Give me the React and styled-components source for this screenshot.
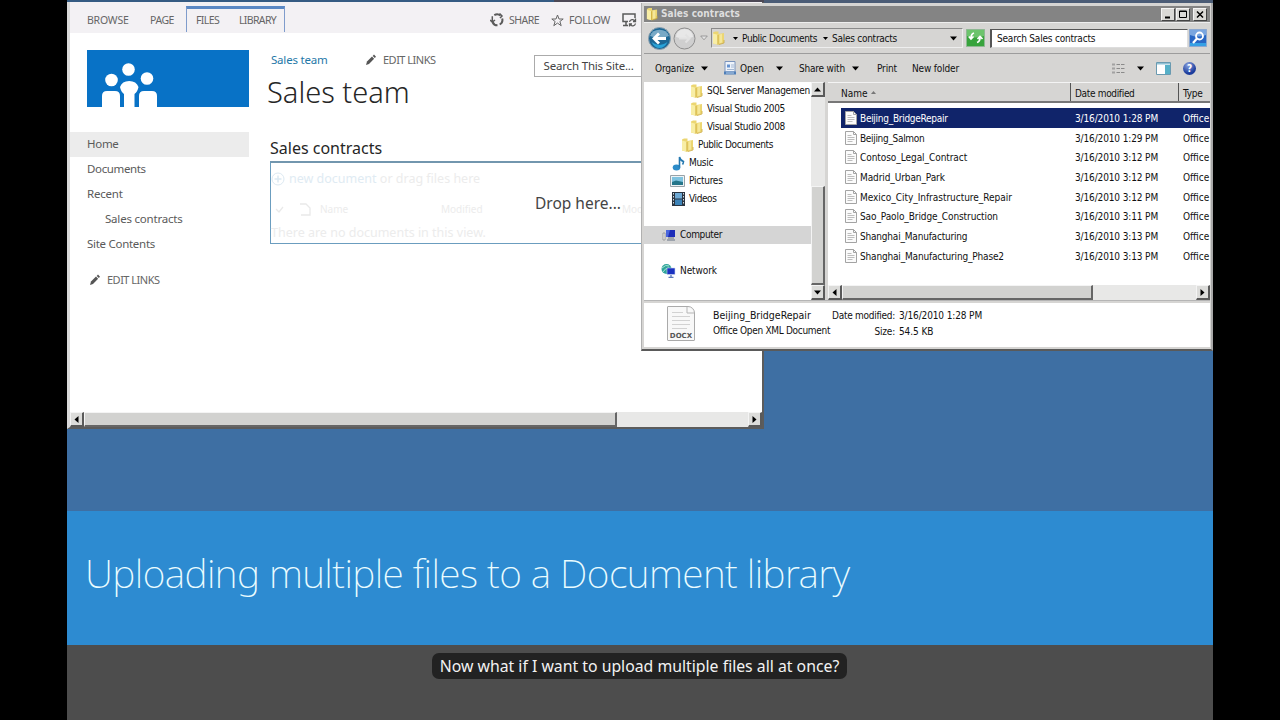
import React from 'react'
import styled, { createGlobalStyle } from 'styled-components'

const GlobalStyle = createGlobalStyle`
  * { box-sizing: border-box; }
  body {
    margin: 0;
    background: #000;
    overflow: hidden;
  }
`

const Stage = styled.main`
  width: 1280px;
  height: 720px;
  padding: 0 67px;
  background: #000;
  font-family: "Noto Sans", "Open Sans", sans-serif;
  white-space: nowrap;
`

const Desktop = styled.section`
  position: relative;
  height: 511px;
  overflow: hidden;
  background: #3e6fa3;
`

const TopEdge = styled.div`
  height: 3px;
  background: linear-gradient(90deg, #355b83 0 487px, #4c4855 487px 697px, #4b5c76 697px);
`

const Banner = styled.section`
  height: 134px;
  padding-left: 18px;
  background: #2d8bd1;
`

const BannerTitle = styled.h1`
  margin: 0;
  color: #eafcff;
  font-size: 39px;
  font-weight: 250;
  line-height: 124px;
  letter-spacing: -0.58px;
`

const Footer = styled.footer`
  display: flex;
  justify-content: center;
  align-items: flex-start;
  height: 75px;
  padding: 8px 1px 0 0;
  background: #4d4d4d;
`

const Caption = styled.p`
  margin: 0;
  width: 415px;
  height: 26px;
  border-radius: 7px;
  background: #222;
  color: #f2f2f2;
  font-size: 15.8px;
  line-height: 26px;
  text-align: center;
`

const Text = styled.span`
  letter-spacing: ${props => props.$track || 0}px;
`

/* ---------- classic scroll bars ---------- */

const Bar = styled.div`
  display: flex;
  flex: none;
  flex-direction: ${props => (props.$vertical ? 'column' : 'row')};
  ${props => (props.$vertical ? 'width: 14px;' : 'height: 15px;')}
  background: #e8e8e7;
`

const BarButton = styled.div`
  display: flex;
  flex: none;
  align-items: center;
  justify-content: center;
  width: 14px;
  height: 15px;
  background: #dcdcda;
  border: 1px solid #f4f4f4;
  border-right: 2px solid #5a5a5a;
  border-bottom: 2px solid #5a5a5a;
`

const BarThumb = styled.div`
  flex: none;
  ${props => (props.$vertical ? 'height' : 'width')}: ${props => props.$size}px;
  background: #d2d2d0;
  border: 1px solid #f4f4f4;
  border-right: 2px solid #666;
  border-bottom: 2px solid #666;
`

const BarSpace = styled.div`
  flex: 1;
`

const Arrow = ({ dir, size = 7, color = '#000' }) => {
  const paths = {
    left: 'M5.5 0v7L1.5 3.5z',
    right: 'M1.5 0v7l4-3.5z',
    up: 'M0 5.5h7L3.5 1.5z',
    down: 'M0 1.5h7l-3.5 4z',
  }
  return (
    <svg width={size} height={size} viewBox="0 0 7 7">
      <path d={paths[dir]} fill={color} />
    </svg>
  )
}

/* ---------- team site window ---------- */

const SiteWindow = styled.div`
  position: absolute;
  left: 0;
  top: 2px;
  display: flex;
  flex-direction: column;
  width: 697px;
  height: 427px;
  background: #fff;
  border-left: 3px solid #d9d9d9;
  border-right: 2px solid #5c5c5c;
  border-bottom: 2px solid #5c5c5c;
`

const Ribbon = styled.div`
  display: flex;
  height: 31px;
  padding-left: 17px;
  background: #f3f1f4;
  color: #666;
  font-size: 10.5px;
  line-height: 36px;
`

const Tab = styled.span`
  width: ${props => props.$w}px;
  letter-spacing: ${props => props.$track}px;
`

const TabGroup = styled.div`
  display: flex;
  width: 99px;
  height: 26px;
  margin-top: 4px;
  padding-left: 9px;
  border: 1px solid #7f9ccc;
  border-top: 3px solid #5b88c4;
  border-bottom: 0;
  line-height: 22px;
`

const Actions = styled.div`
  display: flex;
  align-items: center;
  margin-left: 205px;
  padding-top: 5px;
  line-height: 26px;
`

const Action = styled.span`
  display: flex;
  align-items: center;
  gap: 5px;
  width: ${props => props.$w}px;
  letter-spacing: ${props => props.$track}px;
`

const SiteBody = styled.div`
  display: flex;
  flex: 1;
  gap: 18px;
`

const Sidebar = styled.div`
  width: 179px;
  padding-top: 17px;
`

const Logo = styled.div`
  height: 57px;
  margin: 0 0 25px 17px;
  background: #0872c6;

  svg { display: block; }
`

const NavItem = styled.div`
  height: 25px;
  padding-left: ${props => (props.$nested ? 35 : 17)}px;
  background: ${props => (props.$active ? '#ececec' : 'transparent')};
  color: #5a5a5a;
  font-size: 11.5px;
  line-height: 24px;
  letter-spacing: ${props => props.$track}px;
`

const EditLinks = styled.div`
  display: flex;
  align-items: center;
  gap: 7px;
  height: 16px;
  margin: ${props => props.$margin || 0};
  color: #666;
  font-size: 11px;
  letter-spacing: -0.5px;
`

const Content = styled.div`
  width: 490px;
  padding-top: 22px;
`

const TopLine = styled.div`
  display: flex;
  height: 21px;
  padding-left: 4px;
`

const SiteLink = styled.a`
  width: 95px;
  color: #1f78a8;
  font-size: 11.5px;
  line-height: 10px;
  letter-spacing: -0.2px;
`

const SearchBox = styled.div`
  width: 200px;
  height: 22px;
  margin-left: 98px;
  padding-left: 9px;
  border: 1px solid #ababab;
  color: #444;
  font-size: 11.5px;
  line-height: 20px;
  letter-spacing: -0.18px;
`

const PageTitle = styled.h2`
  margin: 0;
  height: 61px;
  color: #262626;
  font-size: 29px;
  font-weight: 300;
  line-height: 32px;
`

const ListTitle = styled.h3`
  margin: 0 0 0 3px;
  height: 24px;
  color: #262626;
  font-size: 16px;
  font-weight: 400;
  line-height: 22px;
`

const DropZone = styled.div`
  position: relative;
  height: 83px;
  margin-left: 3px;
  border: 1px solid #6b9dbf;
  border-top: 2px solid #7296ae;
  font-size: 12.5px;
  color: #ececec;
`

const FaintLine = styled.div`
  display: flex;
  align-items: center;
  gap: ${props => props.$gap || 0}px;
  height: ${props => props.$h}px;
  padding-left: ${props => props.$pad || 0}px;
  font-size: ${props => props.$size || 12.5}px;
`

const FaintCell = styled.span`
  width: ${props => props.$w}px;
`

const NewLink = styled.span`
  color: #e0ebf3;
`

const DropHint = styled.div`
  position: absolute;
  left: 264px;
  top: 29px;
  color: #444;
  font-size: 15.5px;
  line-height: 22px;
`

const Pencil = () => (
  <svg width="10" height="11" viewBox="0 0 10 11">
    <path d="M0 11l1-3.500L6 2.600 8.100 4.800 3 10z" fill="#555" />
    <path d="M6.700 1.900L8 .6 10 2.700 8.800 4z" fill="#555" />
  </svg>
)

const SharePoint = () => (
  <Logo>
    <svg width="72" height="57" viewBox="0 0 72 57">
      <g fill="#fff">
        <circle cx="41.500" cy="19.500" r="6.300" />
        <circle cx="24.500" cy="30" r="6.300" />
        <circle cx="60" cy="28.500" r="6.300" />
        <path d="M15 57V46q0-5 5-5h8q5 0 5 5v11z" />
        <path d="M52 57V46q0-5 5-5h8q5 0 5 5v11z" />
        <path d="M33 37q2-6 9.200-6t9.300 6q-1 5-4 7V57H37V44q-3-2-4-7z" />
      </g>
    </svg>
  </Logo>
)

const ShareIcon = () => (
  <svg width="14" height="14" viewBox="0 0 14 14" fill="none" stroke="#5a5a5a">
    <path d="M4.300 2.200A5.300 5.300 0 0 1 10.500 2.600M12.200 5.500a5.300 5.300 0 0 1-2.500 6M7.500 12.300a5.300 5.300 0 0 1-5-3.300" strokeWidth="2" />
    <path d="M2.300 3.300v5M0 7l2.300 2L5 7M9.500 .5l2.500 2.500-2 2" strokeWidth="1.500" />
  </svg>
)

const StarIcon = () => (
  <svg width="13" height="13" viewBox="0 0 13 13">
    <path d="M6.500 1l1.500 4h4.200L8.900 7.500l1.300 4.200-3.700-2.600-3.700 2.600 1.300-4.200L.8 5H5z" fill="none" stroke="#666" />
  </svg>
)

const SyncIcon = () => (
  <svg width="15" height="14" viewBox="0 0 15 14" fill="none" stroke="#5a5a5a" strokeWidth="1.500">
    <path d="M6 8.500H1V1h12v4M1 12.500h5M4 9v3" />
    <path d="M7.500 9a3 3 0 0 1 5.500-1M13.500 10.500a3 3 0 0 1-5.500 1M13.500 5.500v3H11M7.500 13.500v-2.500h2.500" strokeWidth="1.300" />
  </svg>
)

const AddIcon = () => (
  <svg width="14" height="14" viewBox="0 0 14 14" fill="none" stroke="#dce9f2">
    <circle cx="7" cy="7" r="6" />
    <path d="M7 3.500v7M3.500 7h7" strokeWidth="1.500" />
  </svg>
)

const FaintMarks = () => (
  <svg width="40" height="14" viewBox="0 0 40 14" fill="none" stroke="#e9e9e9">
    <path d="M1 7l3 3 4-5M25 2h6l4 4v7H26" strokeWidth="1.300" />
  </svg>
)

const nav = [
  { label: 'Home', track: -0.3, active: true },
  { label: 'Documents', track: -0.36 },
  { label: 'Recent', track: -0.2 },
  { label: 'Sales contracts', track: -0.2, nested: true },
  { label: 'Site Contents', track: -0.28 },
]

const TeamSite = () => (
  <SiteWindow>
    <Ribbon>
      <Tab $w={63} $track={-0.2}>BROWSE</Tab>
      <Tab $w={36} $track={-0.45}>PAGE</Tab>
      <TabGroup>
        <Tab $w={43} $track={-0.6}>FILES</Tab>
        <Tab $w={44} $track={-0.65}>LIBRARY</Tab>
      </TabGroup>
      <Actions>
        <Action $w={61} $track={-0.5}><ShareIcon />SHARE</Action>
        <Action $w={71} $track={-0.2}><StarIcon />FOLLOW</Action>
        <SyncIcon />
      </Actions>
    </Ribbon>
    <SiteBody>
      <Sidebar>
        <SharePoint />
        {nav.map(item => (
          <NavItem key={item.label} $track={item.track} $active={item.active} $nested={item.nested}>
            {item.label}
          </NavItem>
        ))}
        <EditLinks $margin="14px 0 0 20px"><Pencil />EDIT LINKS</EditLinks>
      </Sidebar>
      <Content>
        <TopLine>
          <SiteLink>Sales team</SiteLink>
          <EditLinks $margin="-4px 0 0"><Pencil />EDIT LINKS</EditLinks>
          <SearchBox>Search This Site...</SearchBox>
        </TopLine>
        <PageTitle>Sales team</PageTitle>
        <ListTitle>Sales contracts</ListTitle>
        <DropZone>
          <FaintLine $h={31} $pad={0} $gap={4}>
            <AddIcon />
            <span><NewLink>new document</NewLink> or drag files here</span>
          </FaintLine>
          <FaintLine $h={29} $pad={4} $gap={5} $size={10}>
            <FaintMarks />
            <FaintCell $w={116}>Name</FaintCell>
            <FaintCell $w={176}>Modified</FaintCell>
            <FaintCell $w={80}>Modified By</FaintCell>
          </FaintLine>
          <FaintLine $h={18}>There are no documents in this view.</FaintLine>
          <DropHint>Drop here...</DropHint>
        </DropZone>
      </Content>
    </SiteBody>
    <Bar>
      <BarButton><Arrow dir="left" /></BarButton>
      <BarThumb $size={533} />
      <BarSpace />
      <BarButton><Arrow dir="right" /></BarButton>
    </Bar>
  </SiteWindow>
)

/* ---------- explorer window ---------- */

const ExplorerWindow = styled.div`
  position: absolute;
  left: 574px;
  top: 3px;
  display: flex;
  flex-direction: column;
  width: 572px;
  height: 348px;
  padding: 3px 1px 2px 2px;
  background: #d6d5d3;
  border-left: 1px solid #b0b0b0;
  border-right: 2px solid #a8a8a8;
  border-bottom: 2px solid #5a5a5a;
  color: #111;
  font-family: "DejaVu Sans Condensed", "DejaVu Sans", sans-serif;
  font-size: 10px;
`

const TitleBar = styled.div`
  display: flex;
  align-items: center;
  height: 16px;
  padding: 0 3px 0 2px;
  gap: 3px;
  background: #848484;
  color: #dedede;
  font-weight: bold;
  line-height: 14px;
`

const WindowButtons = styled.div`
  display: flex;
  gap: 1px;
  margin-left: auto;
`

const WindowButton = styled.div`
  display: flex;
  width: 14px;
  height: 13px;
  margin-left: ${props => (props.$apart ? 2 : 0)}px;
  background: #dad9d6;
  border: 1px solid #f4f4f4;
  border-right-color: #444;
  border-bottom-color: #444;
`

const AddressRow = styled.div`
  display: flex;
  align-items: center;
  height: 32px;
  padding: 0 1px 0 4px;
  border-top: 1px solid #eee;
  border-bottom: 1px solid #9c9c9c;
`

const NavButtons = styled.div`
  display: flex;
  align-items: center;
  width: 63px;
`

const AddressBox = styled.div`
  display: flex;
  align-items: center;
  width: 252px;
  height: 20px;
  padding: 0 5px 0 0;
  border: 1px solid #8a8a8a;
  border-right-color: #eee;
  border-bottom-color: #eee;
`

const Crumb = styled.span`
  display: flex;
  align-items: center;
  gap: 4px;
  width: ${props => props.$w}px;
  margin-left: ${props => props.$left || 0}px;
`

const FindBox = styled.div`
  width: 198px;
  height: 19px;
  margin: 0 1px 0 5px;
  padding-left: 5px;
  background: #fff;
  border: 1px solid #555;
  border-left-width: 2px;
  border-right-color: #ddd;
  border-bottom-color: #ddd;
  line-height: 18px;
`

const Toolbar = styled.div`
  display: flex;
  align-items: center;
  height: 28px;
  padding: 0 14px 0 11px;
`

const Command = styled.span`
  display: flex;
  align-items: center;
  gap: 7px;
  width: ${props => props.$w}px;
`

const ToolIcons = styled.div`
  display: flex;
  align-items: center;
  gap: 12px;
  margin-left: auto;
`

const Panes = styled.div`
  display: flex;
  height: 219px;
  border-bottom: 1px solid #b5b5b5;
`

const Tree = styled.div`
  width: 167px;
  overflow: hidden;
  background: #fff;
`

const TreeRow = styled.div`
  display: flex;
  align-items: center;
  height: 18px;
  gap: 4px;
  padding-left: ${props => props.$pad}px;
  background: ${props => (props.$active ? '#d5d5d5' : '#fff')};
  line-height: ${props => (props.$pad > 20 ? 18 : 16)}px;
`

const FileList = styled.div`
  display: flex;
  flex: 1;
  flex-direction: column;
  margin-left: 3px;
  overflow: hidden;
  background: #fff;
`

const HeaderRow = styled.div`
  display: grid;
  grid-template-columns: 243px 108px 1fr;
  height: 21px;
  background: #d6d5d3;
  border-top: 1px solid #f4f4f4;
  border-bottom: 2px solid #777;
  line-height: 21px;
`

const HeaderCell = styled.div`
  height: 18px;
  padding-left: ${props => props.$pad || 4}px;
  border-right: ${props => (props.$last ? 0 : '1px solid #555')};

  svg { margin: 0 0 2px 1px; }
`

const Files = styled.div`
  flex: 1;
  padding-top: 5px;
`

const FileRow = styled.div`
  display: grid;
  grid-template-columns: 231px 108px 1fr;
  align-items: center;
  height: 19.7px;
  margin-left: 13px;
  padding-top: 1px;
  background: ${props => (props.$selected ? '#10246a' : '#fff')};
  color: ${props => (props.$selected ? '#fff' : '#111')};
`

const FileName = styled.div`
  display: flex;
  align-items: center;
  gap: 3px;
  padding-left: 4px;

  svg { margin-top: -1px; }
`

const Cell = styled.div`
  padding-left: 3px;
`

const Details = styled.div`
  display: flex;
  flex: 1;
  margin-top: 2px;
  padding: 3px 0 0 23px;
  background: #fff;
`

const DetailsColumn = styled.div`
  width: ${props => props.$w}px;
  margin-left: ${props => props.$left}px;
  padding-top: ${props => props.$top || 2}px;
  line-height: 16px;
  text-align: ${props => props.$align || 'left'};
`

const BigText = styled.div`
  font-size: 10.5px;
`

const Folder = ({ w = 13 }) => (
  <svg width={w} height="14" viewBox="0 0 13 14">
    <path d="M1 1.500L3 .5h3.500V3l5.500-1v9.500L6 13.800 1 12.500z" fill="#ecd672" />
    <path d="M1 2.500l4.500 1.300V13.500L1 12.500z" fill="#f8eea6" />
    <path d="M7.500 3.500l2.500-.6v8.500l-2.500.8z" fill="#f5e79a" />
    <path d="M6 4v9.500M12 9v3l-5 1.500" stroke="#cba838" fill="none" strokeWidth=".8" />
  </svg>
)

const Note = () => (
  <svg width="14" height="15" viewBox="0 0 14 15">
    <ellipse cx="5.500" cy="11.500" rx="3.800" ry="3" fill="#2c8cc9" />
    <path d="M8.500 11.500V1q.5 3 4 4.500-.2 2-1 3" fill="none" stroke="#2478b0" strokeWidth="1.600" />
  </svg>
)

const Picture = () => (
  <svg width="15" height="12" viewBox="0 0 15 12">
    <path d="M.5.5h14v11H.5z" fill="#eef3f5" stroke="#98a2a8" />
    <path d="M2 2h11v8H2z" fill="#7fc3e0" />
    <path d="M2 10V7l4-1.500L13 7v3z" fill="#25768a" />
  </svg>
)

const Film = () => (
  <svg width="13" height="14" viewBox="0 0 13 14">
    <path d="M0 0h13v14H0z" fill="#2a3440" />
    <path d="M3 1h7v5.500H3z" fill="#6ea9d4" />
    <path d="M3 7.500h7V13H3z" fill="#3c83b8" />
    <path d="M1.500 1v12M11.500 1v12" stroke="#d5dde2" strokeDasharray="1.500 1.500" />
  </svg>
)

const Computer = () => (
  <svg width="14" height="13" viewBox="0 0 14 13">
    <path d="M1 4h2v7H1z" fill="#eee" stroke="#888" strokeWidth=".7" />
    <path d="M4 1h9v7H4z" fill="#1c2cb8" />
    <path d="M4 1h4L6 8H4z" fill="#4a66dc" />
    <path d="M6 9h6M5 11h8" stroke="#8b93a0" strokeWidth="1.500" />
  </svg>
)

const Network = () => (
  <svg width="15" height="14" viewBox="0 0 15 14">
    <circle cx="5.500" cy="5" r="5" fill="#2ea39b" />
    <path d="M1 4q4-4 7-2M2 8q2-4 6-4" stroke="#a8e4d0" fill="none" />
    <path d="M6 4h8v6.500H6z" fill="#1a31c0" stroke="#cfd8f0" strokeWidth=".6" />
    <path d="M10 11v2M7.500 13.300h5" stroke="#5a78b8" strokeWidth="1.300" />
  </svg>
)

const Doc = () => (
  <svg width="12" height="14" viewBox="0 0 12 14">
    <path d="M.5.5h8l3 3v10H.5z" fill="#fbfbfb" stroke="#a3a3a3" />
    <path d="M8.500.5v3h3" fill="none" stroke="#a3a3a3" />
    <path d="M2.500 4.500h4M2.500 6.500h7M2.500 8.500h7M2.500 10.500h5" stroke="#bdbdbd" />
  </svg>
)

const DocxSheet = styled.div`
  display: flex;
  flex-direction: column;
  align-items: center;
  width: 28px;
  height: 35px;
  background: #f8f8f8;
  border: 1px solid #aaa;
  border-radius: 1px 7px 1px 1px;
  color: #555;
  font: bold 7px/8px "DejaVu Sans", sans-serif;

  svg { display: block; }
`

const BackIcon = () => (
  <svg width="23" height="23" viewBox="0 0 23 23">
    <circle cx="11.500" cy="11.500" r="11" fill="#1d6794" stroke="#8fa3b0" />
    <path d="M2 9a10 9 0 0 1 19 0q-9 4-19 0z" fill="#78a9c6" />
    <path d="M3.500 15q8 6 16 0-3 6-8 6t-8-6z" fill="#28a3d8" />
    <path d="M18 11.500H7M11 6.500l-5 5 5 5" fill="none" stroke="#fff" strokeWidth="2.800" />
  </svg>
)

const ForwardIcon = () => (
  <svg width="23" height="23" viewBox="0 0 23 23">
    <circle cx="11.500" cy="11.500" r="10.500" fill="#cfcfcf" stroke="#8e8e8e" />
    <path d="M3 10a8.500 8 0 0 1 17 0q-8 3-17 0z" fill="#e8e8e8" />
    <path d="M6 11.500h10M12.500 7.500l4 4-4 4" fill="none" stroke="#e2e2e2" strokeWidth="2" />
  </svg>
)

const HistoryIcon = () => (
  <svg width="8" height="6" viewBox="0 0 8 6">
    <path d="M.7 1h6.600L4 4.800z" fill="#e5e5e5" stroke="#8a8a8a" strokeWidth=".8" />
  </svg>
)

const RefreshIcon = () => (
  <svg width="19" height="18" viewBox="0 0 19 18">
    <path d="M.5.5h18v17H.5z" fill="#37a33c" stroke="#8fb893" />
    <path d="M1 1h17v6q-9 3-17 0z" fill="#6cc46c" />
    <path d="M8 4Q5 5 5 9M2.800 7.500L5 10l2.500-2.500M11 13.500q3-1 3-5M11.500 10L14 7.500l2.500 2.500" fill="none" stroke="#fff" strokeWidth="1.700" />
  </svg>
)

const FindIcon = () => (
  <svg width="18" height="18" viewBox="0 0 18 18">
    <path d="M.5.5h17v17H.5z" fill="#2766c4" stroke="#8ca8d0" />
    <path d="M1 1h16v5Q9 9 1 6z" fill="#79a6e0" />
    <path d="M1 14h16v3H1z" fill="#35a0e4" />
    <circle cx="10.500" cy="7" r="3.500" fill="none" stroke="#fff" strokeWidth="1.800" />
    <path d="M8 9.500L4 14" stroke="#fff" strokeWidth="2.200" />
  </svg>
)

const OpenIcon = () => (
  <svg width="12" height="14" viewBox="0 0 12 14">
    <path d="M1 .5h10v10.500H1z" fill="#eef3fa" stroke="#7a94bd" />
    <path d="M3 3.500h3v3H3z" fill="#6592d0" />
    <path d="M7 4h3M7 6h3M3 8.500h7" stroke="#a4b8d4" />
    <path d="M0 10.500h12v3H0z" fill="#4f7fb8" />
    <path d="M2 12h8" stroke="#bcd2ea" />
  </svg>
)

const ViewIcon = () => (
  <svg width="13" height="11" viewBox="0 0 13 11">
    <path d="M0 1.500h3M0 5.500h3M0 9.500h3" stroke="#a2a2a2" strokeWidth="2" />
    <path d="M4.500 1.500h8M4.500 5.500h8M4.500 9.500h8" stroke="#8a8a8a" strokeDasharray="3.500 1" />
  </svg>
)

const PreviewIcon = () => (
  <svg width="15" height="13" viewBox="0 0 15 13">
    <path d="M.5.5h14v12H.5z" fill="#fff" stroke="#6a9ab0" />
    <path d="M1 1h13v1.500H1z" fill="#8fc0d4" />
    <path d="M9 3h5v9H9z" fill="#55b0c8" />
  </svg>
)

const HelpBadge = styled.span`
  width: 13px;
  height: 13px;
  border-radius: 50%;
  background: radial-gradient(circle at 40% 25%, #8ba4e0, #1c3c9c 65%);
  color: #fff;
  font-weight: bold;
  font-size: 10px;
  line-height: 13px;
  text-align: center;
`

const tree = [
  { label: 'SQL Server Managemen', track: -0.29, pad: 46, icon: <Folder /> },
  { label: 'Visual Studio 2005', track: -0.34, pad: 46, icon: <Folder /> },
  { label: 'Visual Studio 2008', track: -0.34, pad: 46, icon: <Folder /> },
  { label: 'Public Documents', track: -0.36, pad: 37, icon: <Folder /> },
  { label: 'Music', track: -0.3, pad: 27, icon: <Note /> },
  { label: 'Pictures', track: -0.25, pad: 26, icon: <Picture /> },
  { label: 'Videos', track: -0.4, pad: 28, icon: <Film /> },
  { label: '', pad: 0 },
  { label: 'Computer', track: -0.33, pad: 18, icon: <Computer />, active: true },
  { label: '', pad: 0 },
  { label: 'Network', track: -0.1, pad: 17, icon: <Network /> },
]

const files = [
  { name: 'Beijing_BridgeRepair', time: '1:28', track: -0.28 },
  { name: 'Beijing_Salmon', time: '1:29', track: -0.32 },
  { name: 'Contoso_Legal_Contract', time: '3:12', track: -0.06 },
  { name: 'Madrid_Urban_Park', time: '3:12', track: -0.1 },
  { name: 'Mexico_City_Infrastructure_Repair', time: '3:12', track: -0.03 },
  { name: 'Sao_Paolo_Bridge_Construction', time: '3:11', track: -0.1 },
  { name: 'Shanghai_Manufacturing', time: '3:13', track: -0.2 },
  { name: 'Shanghai_Manufacturing_Phase2', time: '3:13', track: -0.17 },
]

const Explorer = () => (
  <ExplorerWindow>
    <TitleBar>
      <Folder w={12} />
      <Text $track={0.07}>Sales contracts</Text>
      <WindowButtons>
        <WindowButton>
          <svg width="12" height="11"><path d="M3 8.500h5" stroke="#000" strokeWidth="2" /></svg>
        </WindowButton>
        <WindowButton>
          <svg width="12" height="11"><path d="M2.500 2h7v6.500h-7zM2.500 2.500h7" fill="none" stroke="#000" /></svg>
        </WindowButton>
        <WindowButton $apart>
          <svg width="12" height="11"><path d="M3 2.500l6 6M9 2.500l-6 6" stroke="#000" strokeWidth="1.500" /></svg>
        </WindowButton>
      </WindowButtons>
    </TitleBar>
    <AddressRow>
      <NavButtons>
        <BackIcon />
        <Crumb $left={2}><ForwardIcon /><HistoryIcon /></Crumb>
      </NavButtons>
      <AddressBox>
        <Folder />
        <Crumb $left={8} $w={90}><Arrow dir="down" size={5} /><Text $track={-0.36}>Public Documents</Text></Crumb>
        <Crumb $w={127}><Arrow dir="down" size={5} /><Text $track={-0.26}>Sales contracts</Text></Crumb>
        <Arrow dir="down" />
      </AddressBox>
      <Crumb $left={3}><RefreshIcon /></Crumb>
      <FindBox><Text $track={-0.2}>Search Sales contracts</Text></FindBox>
      <FindIcon />
    </AddressRow>
    <Toolbar>
      <Command $w={69}><Text $track={-0.15}>Organize</Text><Arrow dir="down" /></Command>
      <Command $w={75}>
        <OpenIcon />
        <Crumb $left={-3} $w={29}>Open</Crumb>
        <Arrow dir="down" />
      </Command>
      <Command $w={78}><Text $track={-0.2}>Share with</Text><Arrow dir="down" /></Command>
      <Command $w={35}><Text $track={-0.15}>Print</Text></Command>
      <Text $track={-0.16}>New folder</Text>
      <ToolIcons>
        <ViewIcon />
        <Arrow dir="down" />
        <PreviewIcon />
        <HelpBadge>?</HelpBadge>
      </ToolIcons>
    </Toolbar>
    <Panes>
      <Tree>
        {tree.map((row, i) => (
          <TreeRow key={i} $pad={row.pad} $active={row.active}>
            {row.icon}
            <Text $track={row.track}>{row.label}</Text>
          </TreeRow>
        ))}
      </Tree>
      <Bar $vertical>
        <BarButton><Arrow dir="up" /></BarButton>
        <BarSpace />
        <BarThumb $vertical $size={99} />
        <BarButton><Arrow dir="down" /></BarButton>
      </Bar>
      <FileList>
        <HeaderRow>
          <HeaderCell $pad={13}>Name <Arrow dir="up" size={5} color="#777" /></HeaderCell>
          <HeaderCell><Text $track={-0.33}>Date modified</Text></HeaderCell>
          <HeaderCell $last><Text $track={-0.2}>Type</Text></HeaderCell>
        </HeaderRow>
        <Files>
          {files.map((file, i) => (
            <FileRow key={file.name} $selected={i === 0}>
              <FileName><Doc /><Text $track={file.track}>{file.name}</Text></FileName>
              <Cell><Text $track={-0.13}>{`3/16/2010 ${file.time} PM`}</Text></Cell>
              <Cell>Office</Cell>
            </FileRow>
          ))}
        </Files>
        <Bar>
          <BarButton><Arrow dir="left" /></BarButton>
          <BarThumb $size={251} />
          <BarSpace />
          <BarButton><Arrow dir="right" /></BarButton>
        </Bar>
      </FileList>
    </Panes>
    <Details>
      <DocxSheet>
        <svg width="26" height="25" viewBox="0 0 26 25">
          <path d="M4 5.500h11M4 9.500h18M4 13.500h18M4 17.500h18M4 21.500h15" stroke="#d2d2d2" />
          <path d="M19 0v6h7" fill="none" stroke="#b5b5b5" />
        </svg>
        DOCX
      </DocxSheet>
      <DetailsColumn $left={18} $w={117} $top={1}>
        <BigText>Beijing_BridgeRepair</BigText>
        <Text $track={-0.31}>Office Open XML Document</Text>
      </DetailsColumn>
      <DetailsColumn $left={0} $w={65} $align="right">
        <Text $track={-0.27}>Date modified:</Text><br />
        <Text $track={-0.2}>Size:</Text>
      </DetailsColumn>
      <DetailsColumn $left={4} $w={100}>
        <Text $track={-0.13}>3/16/2010 1:28 PM</Text><br />
        <Text $track={-0.1}>54.5 KB</Text>
      </DetailsColumn>
    </Details>
  </ExplorerWindow>
)

export default function App() {
  return (
    <>
      <GlobalStyle />
      <Stage>
        <Desktop>
          <TopEdge />
          <TeamSite />
          <Explorer />
        </Desktop>
        <Banner>
          <BannerTitle>Uploading multiple files to a Document library</BannerTitle>
        </Banner>
        <Footer>
          <Caption>Now what if I want to upload multiple files all at once?</Caption>
        </Footer>
      </Stage>
    </>
  )
}
